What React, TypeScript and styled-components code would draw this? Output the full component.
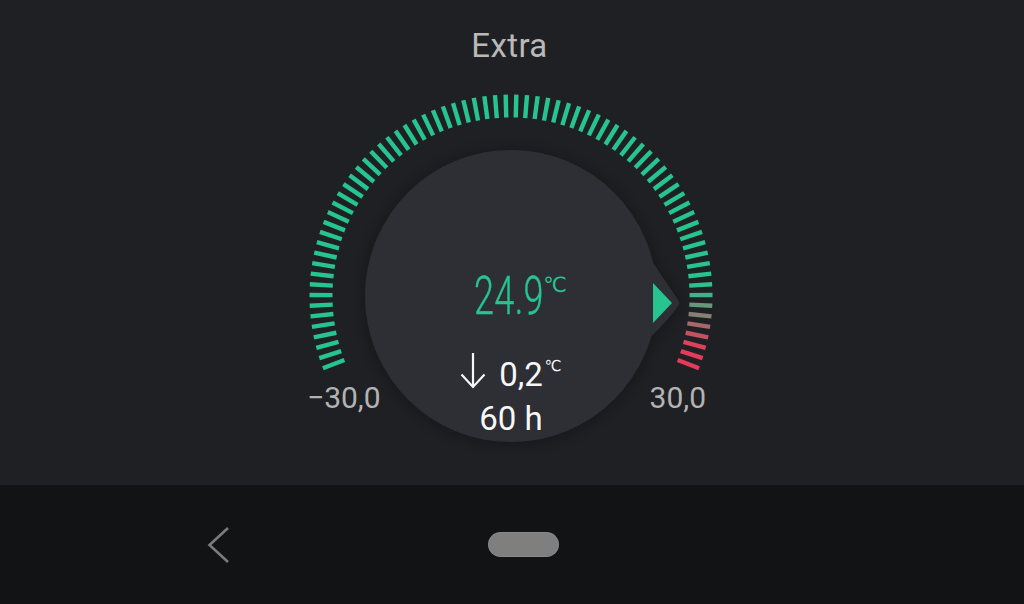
import React from "react";
import styled, { createGlobalStyle } from "styled-components";

const GlobalStyle = createGlobalStyle`
  html, body { margin: 0; padding: 0; background: #1f2023; }
  body { font-family: Roboto, "Noto Sans", sans-serif; }
`;

const Screen = styled.div`
  width: 1024px;
  height: 604px;
  display: flex;
  flex-direction: column;
  overflow: hidden;
`;

const Main = styled.main`
  height: 485px;
  background: #1f2023;
  display: flex;
  flex-direction: column;
  align-items: center;
`;

const Title = styled.h1`
  margin: 29px 5px 0 0;
  height: 33px;
  font: 400 33px/33px Roboto, sans-serif;
  color: #b9b9b9;
  letter-spacing: 0.4px;
`;

const Gauge = styled.div`
  position: relative;
  width: 420px;
  height: 400px;
  margin: 23px 2px 0 0;
`;

const Dial = styled.svg`
  display: block;
`;

const Readout = styled.div`
  position: absolute;
  top: 185px;
  left: 0;
  right: 0;
  display: flex;
  flex-direction: column;
  align-items: center;
`;

const Row = styled.div<{ $top?: number; $height: number; $padLeft?: number }>`
  display: flex;
  align-items: flex-start;
  justify-content: center;
  height: ${(p) => p.$height}px;
  margin-top: ${(p) => p.$top ?? 0}px;
  padding-left: ${(p) => p.$padLeft ?? 0}px;
`;

const BigNumber = styled.span`
  display: inline-block;
  font: 300 53px/53px Roboto, sans-serif;
  color: #27c48f;
  -webkit-text-stroke: 0.4px #27c48f;
  transform: scaleX(0.68);
  transform-origin: left center;
  margin-right: -38px;
  letter-spacing: 0.5px;
`;

const Unit = styled.span<{ $size: number; $top: number; $color: string; $gap: number }>`
  font-family: "DejaVu Sans", sans-serif;
  font-size: ${(p) => p.$size}px;
  line-height: ${(p) => p.$size}px;
  margin-top: ${(p) => p.$top}px;
  margin-left: ${(p) => p.$gap}px;
  color: ${(p) => p.$color};
`;

const Value = styled.span`
  font: 400 33px/33px Roboto, sans-serif;
  color: #f7f7f7;
`;

const ArrowIcon = styled.svg`
  margin-top: -6px;
  margin-right: 13px;
  flex: none;
`;

const Labels = styled.div`
  position: absolute;
  top: 298px;
  left: 0;
  right: 0;
  display: flex;
  justify-content: space-between;
  padding: 0 15px 0 6px;
`;

const Label = styled.span`
  font: 400 30px/30px Roboto, sans-serif;
  color: #b3b3b3;
`;

const NavBar = styled.nav`
  height: 119px;
  background: #121315;
  display: flex;
  align-items: center;
  padding-left: 207px;
`;

const BackIcon = styled.svg`
  display: block;
  flex: none;
`;

const HomePill = styled.div`
  margin-left: 257px;
  width: 71px;
  height: 25px;
  border-radius: 13px;
  background: #7f7f7f;
  box-shadow: inset 0 0 0 1px rgba(255, 255, 255, 0.08);
`;

const CX = 210;
const CY = 211;
const N = 74;
const START = 159;
const SPAN = 222;
const R_OUT = 201.5;
const R_IN = 178.5;

const GREEN = [38, 197, 143];
const RED = [228, 60, 88];

const mixFor = (i: number) => {
  const table: Record<number, number> = {
    65: 0.04,
    66: 0.14,
    67: 0.32,
    68: 0.5,
    69: 0.68,
    70: 0.84,
    71: 0.96,
    72: 1,
    73: 1,
  };
  return table[i] ?? 0;
};

const tickColor = (i: number) => {
  const t = mixFor(i);
  const c = GREEN.map((g, k) => Math.round(g + (RED[k] - g) * t));
  return `rgb(${c[0]},${c[1]},${c[2]})`;
};

const ticks = Array.from({ length: N }, (_, i) => {
  const a = ((START + (i * SPAN) / (N - 1)) * Math.PI) / 180;
  return {
    x1: CX + R_IN * Math.cos(a),
    y1: CY + R_IN * Math.sin(a),
    x2: CX + R_OUT * Math.cos(a),
    y2: CY + R_OUT * Math.sin(a),
    color: tickColor(i),
  };
});

const DISC_R = 146;
const pt = (deg: number) => {
  const a = (deg * Math.PI) / 180;
  return [CX + DISC_R * Math.cos(a), CY + DISC_R * Math.sin(a)];
};
const p1 = pt(-13);
const p2 = pt(16);
const bulge = `M ${p1[0]} ${p1[1]} C 360 190 370 204 377 215 Q 379.5 218 377 221 C 369 232 359 243 ${p2[0]} ${p2[1]} Z`;

export default function App() {
  return (
    <>
      <GlobalStyle />
      <Screen>
        <Main>
          <Title>Extra</Title>
          <Gauge>
            <Dial width={420} height={400} viewBox="0 0 420 400">
              <defs>
                <filter id="discShadow" x="-30%" y="-30%" width="160%" height="160%">
                  <feDropShadow dx="0" dy="1" stdDeviation="9" floodColor="#000" floodOpacity="0.35" />
                </filter>
              </defs>
              {ticks.map((t, i) => (
                <line
                  key={i}
                  x1={t.x1}
                  y1={t.y1}
                  x2={t.x2}
                  y2={t.y2}
                  stroke={t.color}
                  strokeWidth={4.4}
                />
              ))}
              <g filter="url(#discShadow)" fill="#2e2f34">
                <circle cx={CX} cy={CY} r={DISC_R} />
                <path d={bulge} />
              </g>
              <polygon points="352,198 352,238 371,218" fill="#27c48f" />
            </Dial>
            <Readout>
              <Row $height={53} $padLeft={19}>
                <BigNumber>24.9</BigNumber>
                <Unit $size={21} $top={5} $color="#27c48f" $gap={4}>
                  ℃
                </Unit>
              </Row>
              <Row $height={33} $top={35}>
                <ArrowIcon width={26} height={37} viewBox="0 0 26 37">
                  <path
                    d="M13 1 V35 M1.5 22.5 L13 35 L24.5 22.5"
                    fill="none"
                    stroke="#f7f7f7"
                    strokeWidth={2.2}
                  />
                </ArrowIcon>
                <Value>0,2</Value>
                <Unit $size={15} $top={1} $color="#f7f7f7" $gap={2}>
                  ℃
                </Unit>
              </Row>
              <Row $height={33} $top={11}>
                <Value>60 h</Value>
              </Row>
            </Readout>
            <Labels>
              <Label>−30,0</Label>
              <Label>30,0</Label>
            </Labels>
          </Gauge>
        </Main>
        <NavBar>
          <BackIcon width={24} height={38} viewBox="0 0 24 38">
            <path d="M21 2 L2.5 19 L21 36" fill="none" stroke="#7b7b7b" strokeWidth={2.6} />
          </BackIcon>
          <HomePill />
        </NavBar>
      </Screen>
    </>
  );
}
